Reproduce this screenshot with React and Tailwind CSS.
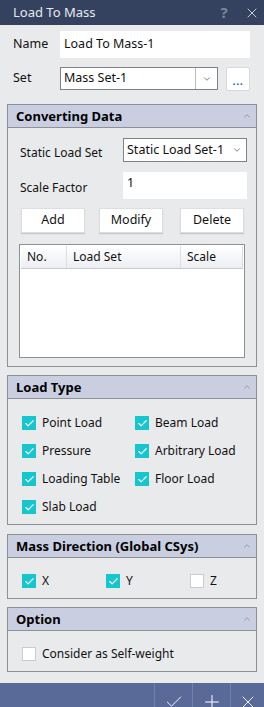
import { Check, ChevronDown, ChevronUp, X, Plus } from 'lucide-react'

const fuente = { fontFamily: '"Noto Sans", "Open Sans", sans-serif' }

function Casilla({ marcado, texto }) {
  return (
    <label className="flex items-center gap-[6px] h-[14px] leading-none text-[12px] text-[#111]">
      {marcado ? (
        <span className="w-[14px] h-[14px] shrink-0 bg-[#15c6cf] flex items-center justify-center">
          <Check size={11} strokeWidth={2.5} className="text-white" />
        </span>
      ) : (
        <span className="w-[14px] h-[14px] shrink-0 bg-white border border-[#c9cbcf]" />
      )}
      {texto}
    </label>
  )
}

function Seccion({ titulo, children, className = '' }) {
  return (
    <div className={'mx-[7px] border border-[#8d9095] ' + className}>
      <div className="h-[23px] bg-[#c9cfe0] border-b border-[#8d9095] flex items-center justify-between pl-[8px] pr-[4px]">
        <span className="text-[13px] font-bold text-black leading-none">{titulo}</span>
        <ChevronUp size={10} strokeWidth={1.2} className="text-[#666]" />
      </div>
      {children}
    </div>
  )
}

export default function App() {
  return (
    <div style={fuente} className="w-[264px] h-[707px] bg-[#e9eaec] flex flex-col overflow-hidden">
      {/* Barra de titulo */}
      <div className="h-[25px] bg-[#34425f] flex items-center pl-[13px] pr-[4px] shrink-0">
        <span className="text-[13px] text-[#e6e9f0] flex-1">Load To Mass</span>
        <span className="text-[15px] font-bold text-[#7c8596] w-[20px] text-center mr-[10px]">?</span>
        <X size={16} strokeWidth={1.3} className="text-[#dde1ea]" />
      </div>

      {/* Nombre y set */}
      <div className="flex items-center mt-[6px] h-[27px] shrink-0">
        <span className="w-[60px] pl-[13px] text-[12.5px] text-[#111]">Name</span>
        <div className="w-[190px] h-[27px] bg-white flex items-center pl-[4px] text-[12.5px] text-[#111]">Load To Mass-1</div>
      </div>
      <div className="flex items-center mt-[8px] h-[25px] shrink-0">
        <span className="w-[60px] pl-[13px] text-[12.5px] text-[#111]">Set</span>
        <div className="w-[158px] h-[23px] bg-white border border-[#7f8287] flex items-center text-[12.5px] text-[#111]">
          <span className="flex-1 pl-[3px]">Mass Set-1</span>
          <span className="w-[22px] h-full border-l border-[#b9bbbf] flex items-center justify-center">
            <ChevronDown size={10} strokeWidth={1.5} className="text-[#333]" />
          </span>
        </div>
        <div className="ml-[8px] w-[24px] h-[24px] bg-white border border-[#d6d8dc] rounded-[2px] flex items-end justify-center pb-[4px]">
          <span className="text-[11px] font-bold leading-none text-[#1a6fc4] tracking-[0.5px]">...</span>
        </div>
      </div>

      {/* Converting Data */}
      <Seccion titulo="Converting Data" className="mt-[13px] shrink-0">
        <div className="flex items-center mt-[10px] pl-[12px] h-[24px]">
          <span className="w-[103px] text-[12px] text-[#111] pt-[6px]">Static Load Set</span>
          <div className="w-[124px] h-[24px] bg-white border border-[#7f8287] flex items-center pl-[3px] pr-[4px] text-[12.5px] text-[#111]">
            <span className="flex-1">Static Load Set-1</span>
            <ChevronDown size={10} strokeWidth={1.5} className="text-[#333]" />
          </div>
        </div>
        <div className="flex items-center mt-[10px] pl-[12px] h-[27px]">
          <span className="w-[103px] text-[12px] text-[#111] pt-[4px]">Scale Factor</span>
          <div className="w-[124px] h-[27px] bg-white pl-[4px] pt-[2px] text-[12.5px] text-[#111]">1</div>
        </div>
        <div className="flex mt-[9px] pl-[13px] h-[25px] text-[12.5px] text-[#111]">
          <button className="w-[64px] h-[25px] bg-white border border-[#dcdee2] shadow-[0_1px_1px_rgba(0,0,0,0.15)]">Add</button>
          <button className="w-[64px] h-[25px] ml-[14px] bg-white border border-[#dcdee2] shadow-[0_1px_1px_rgba(0,0,0,0.15)]">Modify</button>
          <button className="w-[64px] h-[25px] ml-[17px] bg-white border border-[#dcdee2] shadow-[0_1px_1px_rgba(0,0,0,0.15)]">Delete</button>
        </div>
        <div className="mx-[11px] mt-[11px] mb-[8px] h-[114px] bg-white border border-[#8d9095] pt-[1px] px-[1px]">
          <div className="flex h-[23px] bg-gradient-to-b from-white to-[#eceef2] border-b border-[#c7cad0] text-[12px] text-[#111]">
            <span className="w-[46px] pl-[6px] flex items-center border-r border-[#dcdee2]">No.</span>
            <span className="w-[114px] pl-[6px] flex items-center border-r border-[#dcdee2]">Load Set</span>
            <span className="w-[62px] pl-[6px] flex items-center border-r border-[#dcdee2]">Scale</span>
          </div>
        </div>
      </Seccion>

      {/* Load Type */}
      <Seccion titulo="Load Type" className="mt-[8px] shrink-0">
        <div className="grid grid-cols-[113px_1fr] gap-y-[14px] pl-[14px] pt-[17px] pb-[10px]">
          <Casilla marcado texto="Point Load" />
          <Casilla marcado texto="Beam Load" />
          <Casilla marcado texto="Pressure" />
          <Casilla marcado texto="Arbitrary Load" />
          <Casilla marcado texto="Loading Table" />
          <Casilla marcado texto="Floor Load" />
          <Casilla marcado texto="Slab Load" />
        </div>
      </Seccion>

      {/* Mass Direction */}
      <Seccion titulo="Mass Direction (Global CSys)" className="mt-[9px] shrink-0">
        <div className="grid grid-cols-[84px_84px_1fr] pl-[14px] pt-[16px] pb-[10px]">
          <Casilla marcado texto="X" />
          <Casilla marcado texto="Y" />
          <Casilla texto="Z" />
        </div>
      </Seccion>

      {/* Option */}
      <Seccion titulo="Option" className="mt-[8px] shrink-0">
        <div className="pl-[14px] pt-[16px] pb-[10px]">
          <Casilla texto="Consider as Self-weight" />
        </div>
      </Seccion>

      {/* Barra inferior */}
      <div className="mt-auto h-[24px] bg-[#5a6a98] flex justify-end shrink-0 overflow-hidden">
        <span className="w-[38px] border-l border-[#7380aa] flex justify-center pt-[9px]">
          <Check size={20} strokeWidth={1.1} className="text-white shrink-0" />
        </span>
        <span className="w-[38px] border-l border-[#7380aa] flex justify-center pt-[8px]">
          <Plus size={22} strokeWidth={1.1} className="text-white shrink-0" />
        </span>
        <span className="w-[34px] border-l border-[#7380aa] flex justify-center pt-[9px]">
          <X size={20} strokeWidth={1.1} className="text-white shrink-0" />
        </span>
      </div>
    </div>
  )
}
